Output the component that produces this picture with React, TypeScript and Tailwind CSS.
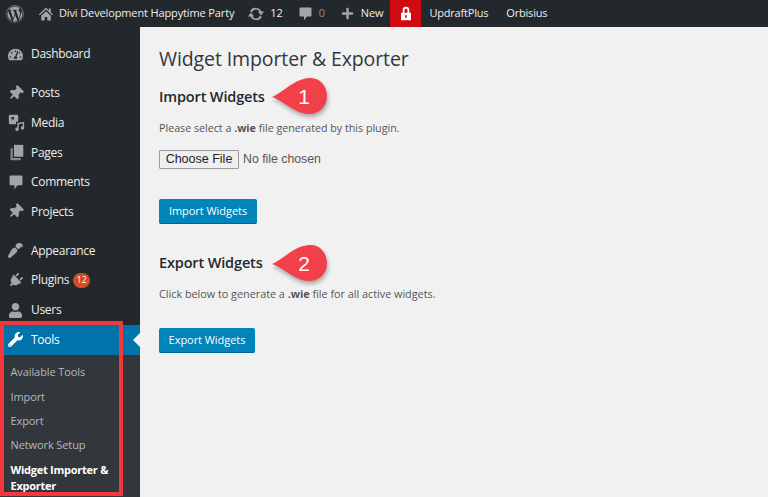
import type { ReactNode } from "react";
import { FaWordpress, FaPlus, FaThumbtack, FaTachometerAlt, FaPaintBrush, FaPlug, FaUser, FaWrench } from "react-icons/fa";

const font = "font-['Open_Sans','Noto_Sans',sans-serif]";

function SyncIcon() {
  return (
    <svg viewBox="0 0 20 20" className="w-[18px] h-[18px]" fill="#a0a5aa">
      <path d="M10 3.2a6.8 6.8 0 0 1 6.2 4H19l-3.4 4.6L12 7.2h1.9a4.4 4.4 0 0 0-8.1.9L3.4 6.9A6.8 6.8 0 0 1 10 3.2zM10 16.8a6.8 6.8 0 0 1-6.2-4H1l3.4-4.6L8 12.8H6.1a4.4 4.4 0 0 0 8.1-.9l2.4 1.2A6.8 6.8 0 0 1 10 16.8z" />
    </svg>
  );
}

function HomeIcon() {
  return (
    <svg viewBox="0 0 20 20" className="w-[16px] h-[16px]" fill="#a0a5aa">
      <path d="M10 2 1 10.5l1.2 1.2L10 4.4l7.8 7.3 1.2-1.2-3-2.8V3h-2.4v2.5zM4 12.2V18h4.4v-4.4h3.2V18H16v-5.8l-6-5.6z" />
    </svg>
  );
}

function CommentIcon({ size }: { size: string }) {
  return (
    <svg viewBox="0 0 20 20" className={size} fill="currentColor">
      <path d="M3 2h14a1 1 0 0 1 1 1v10a1 1 0 0 1-1 1h-5l-4 5v-5H3a1 1 0 0 1-1-1V3a1 1 0 0 1 1-1z" />
    </svg>
  );
}

function MediaIcon() {
  return (
    <svg viewBox="0 0 20 20" className="w-[17px] h-[17px]" fill="currentColor">
      <path fillRule="evenodd" d="M2 1h9a1 1 0 0 1 1 1v7H9.5v3H2a1 1 0 0 1-1-1V2a1 1 0 0 1 1-1zm2 2.5v3h3v-3z" />
      <path d="M11 10.5 19 9v7.5a2 2 0 1 1-1.6-2V11.2l-4.8.9v6a2 2 0 1 1-1.6-2z" />
    </svg>
  );
}

function PagesIcon() {
  return (
    <svg viewBox="0 0 20 20" className="w-[17px] h-[17px]" fill="currentColor">
      <path d="M7 1h11v14H7z" />
      <path d="M3 5h2.5v11.5H15V19H3z" opacity="0.8" />
    </svg>
  );
}

function LockIcon() {
  return (
    <svg viewBox="0 0 14 18" className="w-[12px] h-[15px]" fill="white">
      <path fillRule="evenodd" d="M3 8V5a4 4 0 0 1 8 0v3h2v9H1V8zm2.2 0h3.6V5a1.8 1.8 0 0 0-3.6 0zM6 11v3h2v-3z" />
    </svg>
  );
}

function MenuItem({ icon, label, badge }: { icon: ReactNode; label: string; badge?: string }) {
  return (
    <div className="h-[29.6px] flex items-center text-[#eeeeee] text-[12px] tracking-[-0.3px]">
      <span className="w-[31px] pl-2 flex items-center text-[#a0a5aa] text-[15px]">{icon}</span>
      <span>{label}</span>
      {badge && (
        <span className="ml-[4px] w-[17px] h-[15px] rounded-full bg-[#d54e21] text-white text-[8.5px] tracking-normal flex items-center justify-center">{badge}</span>
      )}
    </div>
  );
}

function Callout({ n, top }: { n: string; top: string }) {
  return (
    <div className={`absolute left-[270px] ${top} w-[60px] h-[40px]`}>
      <svg viewBox="0 0 60 40" className="w-[60px] h-[40px] drop-shadow-[1px_3px_2px_rgba(0,0,0,0.3)]">
        <path d="M2 20 C14 15 24 2 39 1 C50 0 57 9 57 19 C57 30 49 37 39 37 C25 37 14 24 2 20 Z" fill="#f2404a" />
      </svg>
      <span className="absolute left-[26px] top-[6px] w-[16px] text-center text-white text-[21px] leading-[28px] font-['Liberation_Sans',sans-serif]">{n}</span>
    </div>
  );
}

export default function App() {
  return (
    <div className={`relative w-[768px] h-[497px] overflow-hidden bg-[#f1f1f1] ${font}`}>
      {/* Admin bar */}
      <div className="h-[27px] bg-[#23282d] flex items-center text-[#eeeeee] text-[11px] tracking-[-0.13px]">
        <FaWordpress className="ml-[6px] text-[#a0a5aa] text-[18px]" />
        <span className="ml-[14px]"><HomeIcon /></span>
        <span className="ml-[5px]">Divi Development Happytime Party</span>
        <span className="ml-[13px]"><SyncIcon /></span>
        <span className="ml-[5px]">12</span>
        <span className="ml-[15px] text-[#a0a5aa]"><CommentIcon size="w-[15px] h-[15px]" /></span>
        <span className="ml-[6px] text-[#8a8f94]">0</span>
        <FaPlus className="ml-[16px] text-[#a0a5aa] text-[13px]" />
        <span className="ml-[7px]">New</span>
        <div className="ml-[7px] w-[31px] h-[27px] bg-[#d10a10] flex items-center justify-center">
          <LockIcon />
        </div>
        <span className="ml-[8px] tracking-[-0.2px]">UpdraftPlus</span>
        <span className="ml-[18px] tracking-[-0.2px]">Orbisius</span>
      </div>

      <div className="flex h-[470px]">
        {/* Sidebar */}
        <div className="relative w-[140px] shrink-0 bg-[#23282d] flex flex-col pt-[12.5px]">
          <MenuItem icon={<FaTachometerAlt />} label="Dashboard" />
          <div className="h-[9.5px]" />
          <MenuItem icon={<FaThumbtack className="rotate-45" />} label="Posts" />
          <MenuItem icon={<MediaIcon />} label="Media" />
          <MenuItem icon={<PagesIcon />} label="Pages" />
          <MenuItem icon={<CommentIcon size="w-[16px] h-[16px]" />} label="Comments" />
          <MenuItem icon={<FaThumbtack className="rotate-45" />} label="Projects" />
          <div className="h-[9.5px]" />
          <MenuItem icon={<FaPaintBrush className="rotate-180" />} label="Appearance" />
          <MenuItem icon={<FaPlug className="rotate-45" />} label="Plugins" badge="12" />
          <MenuItem icon={<FaUser />} label="Users" />
          <div className="relative h-[30px] bg-[#0073aa] text-white text-[12px] tracking-[-0.3px] flex items-center">
            <span className="w-[31px] pl-2 flex items-center text-[15px]"><FaWrench /></span>
            <span>Tools</span>
            <span className="absolute right-0 top-[8px] border-y-[7px] border-y-transparent border-r-[7px] border-r-[#f1f1f1]" />
          </div>
          <div className="flex-1 bg-[#32373c] pt-[5.5px] pl-[10.5px] text-[11px] tracking-[-0.1px] text-[#b4b9be]">
            <div className="h-[24.4px] flex items-center">Available Tools</div>
            <div className="h-[24.4px] flex items-center">Import</div>
            <div className="h-[24.4px] flex items-center">Export</div>
            <div className="h-[24.4px] flex items-center">Network Setup</div>
            <div className="pt-[4px] leading-[16px] font-bold tracking-[-0.25px] text-white">Widget Importer &amp;<br />Exporter</div>
          </div>
        </div>

        {/* Content */}
        <div className="flex-1 pl-[19px] text-[#444444]">
          <h1 className="mt-[18px] text-[19.5px] leading-[28px] tracking-[-0.1px] text-[#32373c]">Widget Importer &amp; Exporter</h1>
          <h2 className="mt-[13px] text-[14.5px] leading-[22px] font-semibold tracking-[-0.15px] text-[#23282d]">Import Widgets</h2>
          <p className="mt-[12px] text-[10.7px] leading-[16px] text-[#555555]">Please select a <b>.wie</b> file generated by this plugin.</p>
          <div className="mt-[14px] flex items-center h-[19px]">
            <button className="w-[80px] h-[19px] bg-[#efefef] border border-[#9a9a9a] rounded-[1px] text-[12.5px] text-[#222222] font-['Liberation_Sans',sans-serif] flex items-center justify-center">Choose File</button>
            <span className="ml-[4px] text-[12.3px] text-[#555555] font-['Liberation_Sans',sans-serif]">No file chosen</span>
          </div>
          <button className="mt-[30px] block w-[98px] h-[25px] bg-[#0085ba] rounded-[2px] border-b border-[#006799] text-white text-[11px] tracking-[-0.05px]">Import Widgets</button>
          <h2 className="mt-[28px] text-[14.5px] leading-[22px] font-semibold tracking-[-0.15px] text-[#23282d]">Export Widgets</h2>
          <p className="mt-[12px] text-[10.8px] leading-[16px] text-[#555555]">Click below to generate a <b>.wie</b> file for all active widgets.</p>
          <button className="mt-[26px] block w-[96px] h-[25px] bg-[#0085ba] rounded-[2px] border-b border-[#006799] text-white text-[11px] tracking-[-0.05px]">Export Widgets</button>
        </div>
      </div>

      {/* Annotations */}
      <Callout n="1" top="top-[77px]" />
      <Callout n="2" top="top-[244px]" />
      <div className="absolute left-0 top-[321px] w-[123px] h-[175px] border-[4px] border-[#f4363f]" />
    </div>
  );
}
